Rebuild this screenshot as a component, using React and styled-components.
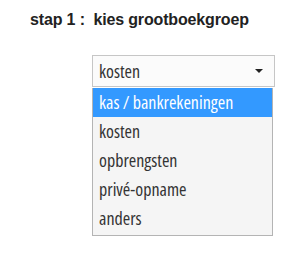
import React from "react";
import styled, { createGlobalStyle } from "styled-components";

const options = ["kas / bankrekeningen", "kosten", "opbrengsten", "privé-opname", "anders"];

const App = () => {
  const selected = "kosten";
  const highlighted = 0;
  return (
    <>
      <GlobalStyle />
      <Page>
        <Heading>stap 1 :&nbsp; kies grootboekgroep</Heading>
        <Dropdown>
          <SelectBox>
            <span>{selected}</span>
            <Arrow />
          </SelectBox>
          <OptionList>
            {options.map((o, i) => (
              <Option key={o} $active={i === highlighted}>
                {o}
              </Option>
            ))}
          </OptionList>
        </Dropdown>
      </Page>
    </>
  );
};

const GlobalStyle = createGlobalStyle`
  body {
    margin: 0;
    background: #ffffff;
  }
`;

const Page = styled.div`
  width: 300px;
  height: 258px;
  padding: 10px 0 0 30px;
  box-sizing: border-box;
`;

const Heading = styled.h1`
  margin: 0;
  font-family: "Liberation Sans", Arial, sans-serif;
  font-weight: bold;
  font-size: 16px;
  letter-spacing: -0.15px;
  line-height: 19px;
  color: #222;
`;

const Dropdown = styled.div`
  margin: 26px 0 0 62px;
  width: 183px;
  font-family: "Open Sans", "Noto Sans", sans-serif;
  font-size: 18px;
  font-stretch: 75%;
  color: #333;
`;

const SelectBox = styled.div`
  height: 32px;
  box-sizing: border-box;
  border: 1px solid #c6c6c6;
  background: #fbfbfb;
  display: flex;
  align-items: center;
  justify-content: space-between;
  padding: 0 11px 0 6px;
`;

const Arrow = styled.span`
  width: 0;
  height: 0;
  border-left: 4px solid transparent;
  border-right: 4px solid transparent;
  border-top: 4px solid #222;
`;

const OptionList = styled.ul`
  list-style: none;
  margin: 1px 0 0 0;
  padding: 0 0 2px 0;
  width: 181px;
  box-sizing: border-box;
  border: 1px solid #b4b4b4;
  border-top: none;
  background: #f5f5f5;
`;

const Option = styled.li`
  height: 29px;
  line-height: 29px;
  padding: 0 6px;
  background: ${(p) => (p.$active ? "#3399ff" : "transparent")};
  color: ${(p) => (p.$active ? "#ffffff" : "#333")};
`;

export default App;
